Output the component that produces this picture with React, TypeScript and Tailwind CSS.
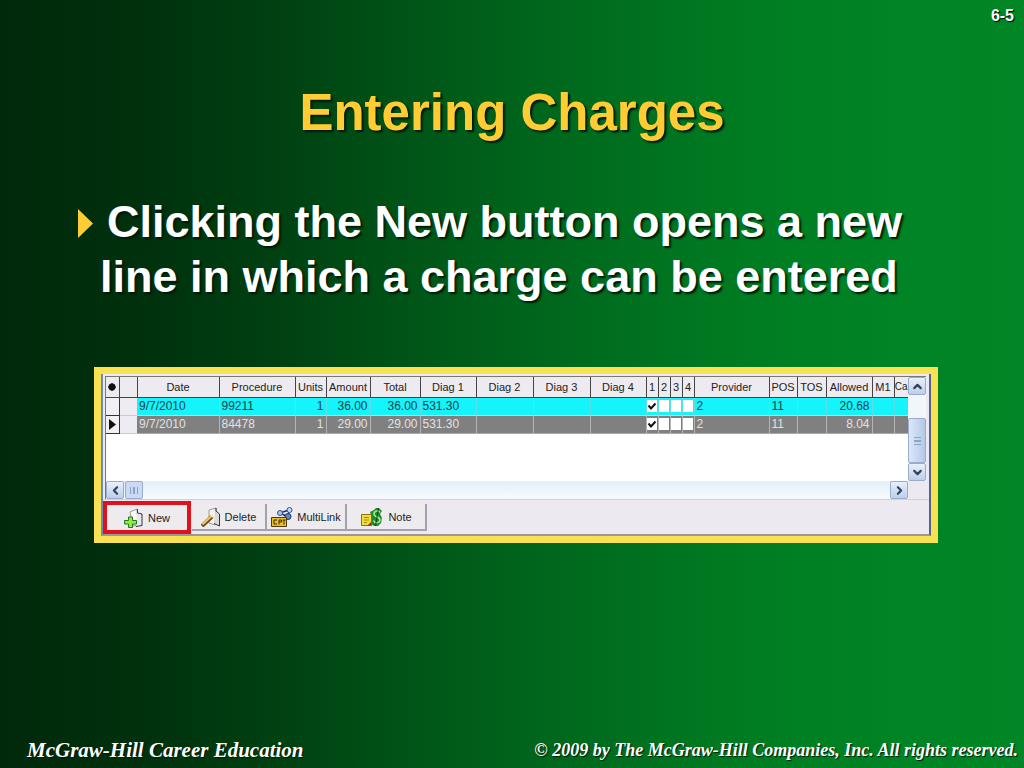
import { ChevronDown, ChevronLeft, ChevronRight, ChevronUp } from "lucide-react";
import type { ReactNode } from "react";

type Column = { label: string; width: string; align?: "left" | "right" };

const columns: Column[] = [
  { label: "Date", width: "w-[82px]", align: "left" },
  { label: "Procedure", width: "w-[76px]", align: "left" },
  { label: "Units", width: "w-[31px]", align: "right" },
  { label: "Amount", width: "w-[44px]", align: "right" },
  { label: "Total", width: "w-[50px]", align: "right" },
  { label: "Diag 1", width: "w-[56px]", align: "left" },
  { label: "Diag 2", width: "w-[57px]" },
  { label: "Diag 3", width: "w-[57px]" },
  { label: "Diag 4", width: "w-[56px]" },
  { label: "1", width: "w-[12px]" },
  { label: "2", width: "w-[12px]" },
  { label: "3", width: "w-[12px]" },
  { label: "4", width: "w-[12px]" },
  { label: "Provider", width: "w-[75px]", align: "left" },
  { label: "POS", width: "w-[28px]", align: "left" },
  { label: "TOS", width: "w-[29px]" },
  { label: "Allowed", width: "w-[46px]", align: "right" },
  { label: "M1", width: "w-[22px]" },
  { label: "Ca", width: "w-[14px]" },
];

const rows = [
  {
    active: false,
    cells: ["9/7/2010", "99211", "1", "36.00", "36.00", "531.30", "", "", "", true, false, false, false, "2", "11", "", "20.68", "", ""],
  },
  {
    active: true,
    cells: ["9/7/2010", "84478", "1", "29.00", "29.00", "531.30", "", "", "", true, false, false, false, "2", "11", "", "8.04", "", ""],
  },
];

function Tick({ label, checked }: { label: string; checked: boolean }) {
  return (
    <span className="relative mx-auto block h-3 w-[10px]">
      <input
        type="checkbox"
        aria-label={label}
        defaultChecked={checked}
        className="peer block h-full w-full appearance-none bg-white"
      />
      <svg viewBox="0 0 10 12" className="pointer-events-none absolute inset-0 hidden h-3 w-[10px] peer-checked:block">
        <path d="M1.5 5.5 4 8.5 8.5 3.5" fill="none" stroke="#111" strokeWidth="2" />
      </svg>
    </span>
  );
}

function ChargeTable() {
  return (
    <table className="w-full table-fixed border-collapse text-[12px] leading-4">
      <colgroup>
        <col className="w-[13px]" />
        <col className="w-[18px]" />
        {columns.map((c) => (
          <col key={c.label} className={c.width} />
        ))}
      </colgroup>
      <thead>
        <tr className="h-5 border-b border-[#444] bg-[#eeebf0] text-[11px] text-[#222]">
          <th className="border-r border-[#444] p-0" aria-label="Current row">
            <svg viewBox="0 0 8 8" className="mx-auto size-2">
              <path d="M4 0 6.6 1.2 8 4 6.6 6.8 4 8 1.4 6.8 0 4 1.4 1.2Z" fill="#111" />
            </svg>
          </th>
          <th className="border-r border-[#444] p-0" aria-label="Status" />
          {columns.map((c) => (
            <th
              key={c.label}
              className="border-r border-[#444] p-0 font-normal whitespace-nowrap last:border-r-0 last:text-[10px]"
            >
              {c.label}
            </th>
          ))}
        </tr>
      </thead>
      <tbody>
        {rows.map((row, i) => (
          <tr
            key={i}
            className={
              row.active
                ? "h-[18px] border-b border-[#aaa] bg-[#808080] text-[#e2e2e2]"
                : "h-[18px] border-b border-[#d4dadc] bg-[#14f4fa] text-[#12434c]"
            }
          >
            <td className="border-r border-b border-[#333] bg-[#f2f0f4] p-0">
              {row.active && (
                <svg viewBox="0 0 7 11" className="mx-auto h-[11px] w-[7px]">
                  <path d="M0 0 7 5.5 0 11Z" fill="#111" />
                </svg>
              )}
            </td>
            <td className="border-b border-[#ccc] bg-[#eeebf2] p-0" />
            {row.cells.map((cell, j) => (
              <td
                key={j}
                className={`border-r p-0 whitespace-nowrap last:border-r-0 ${
                  row.active ? "border-[#b4b4b4]" : "border-[#5ae0e6]"
                } ${columns[j].align === "right" ? "pr-0.5 text-right" : columns[j].align === "left" ? "pl-0.5 text-left" : ""}`}
              >
                {typeof cell === "boolean" ? <Tick label={`Diagnosis ${columns[j].label}, line ${i + 1}`} checked={cell} /> : cell}
              </td>
            ))}
          </tr>
        ))}
      </tbody>
    </table>
  );
}

const scrollButton =
  "grid h-[18px] w-[18px] shrink-0 place-items-center rounded-xs border border-[#9aaccb] bg-gradient-to-b from-[#e8f0fb] to-[#bccfea] text-[#33425e]";

function NewIcon() {
  return (
    <svg viewBox="0 0 20 20" className="size-5 shrink-0">
      <path d="M6 4 13 1 14 17 9 18Z" fill="#f7f7f7" stroke="#999" />
      <path d="M13.500 1V5L18 6V17.500L12 18.500" fill="#e9e7ec" stroke="#333" />
      <path d="M4.500 9H8.500V12.500H12.500V16H8.500V19.500H4.500V16H.5V12.500H4.500Z" fill="#9be83f" stroke="#1f7a24" />
    </svg>
  );
}

function DeleteIcon() {
  return (
    <svg viewBox="0 0 20 20" className="size-5 shrink-0">
      <path d="M8 3 15 1 14 18 8 16Z" fill="#f4f3f6" stroke="#999" />
      <path d="M15 1V4L18.500 7V19L13 16.500" fill="#dcdae0" stroke="#333" />
      <path d="M1 19 12 8.500" stroke="#6b4a18" strokeWidth="4" />
      <path d="M1.500 17.500 11 8.500" stroke="#f6c95a" strokeWidth="2" />
      <path d="M9.500 7 13 10.500" stroke="#fff2b0" strokeWidth="2" />
    </svg>
  );
}

function MultiLinkIcon() {
  return (
    <svg viewBox="0 0 22 20" className="h-5 w-[22px] shrink-0">
      <path d="M9 6 18 3M9 6 17 10M18 3 17 10" stroke="#1c2f55" strokeWidth="1.5" />
      <circle cx="9" cy="6" r="2.500" fill="#a9c6ea" stroke="#2d5590" />
      <circle cx="18.500" cy="3" r="2.500" fill="#c4dcf4" stroke="#2d5590" />
      <circle cx="17" cy="9.500" r="3" fill="#5f8ac6" stroke="#1c2f55" />
      <path d="M.5 10.500H15.500V19.500H.5Z" fill="#e9bd2c" stroke="#4d3c08" />
      <path d="M6 13H3V17H6M8 17.500V13H10.500V15H8M11.500 13H14.500M13 13V17.500" fill="none" stroke="#3a2d06" />
    </svg>
  );
}

function NoteIcon() {
  return (
    <svg viewBox="0 0 24 20" className="h-5 w-6 shrink-0">
      <path d="M10 5 14 3 16 1H19L22 4 20 7 22 11 21 16 18 19H14L11 17 12 11Z" fill="#218a2c" />
      <path d="M20 5.500C19 3 14 3.500 14 7S20.500 9.500 20 13 14.500 16.500 13.500 13.500" fill="none" stroke="#a9e8a4" strokeWidth="1.500" />
      <path d="M18.500 1 15.500 19" stroke="#0e4a16" />
      <path d="M1.500 7.500H11.500V18.500H1.500Z" fill="#f1dc3a" stroke="#8a7412" />
      <path d="M4 10.500H9M4 13H9M4 15.500H7" stroke="#a78a16" />
      <path d="M11.500 14.500V18.500H7.500Z" fill="#a02d12" />
    </svg>
  );
}

function ToolButton({ icon, children, className }: { icon: ReactNode; children: ReactNode; className: string }) {
  return (
    <button type="button" className={`flex items-center justify-center gap-1 whitespace-nowrap bg-[#eeebef] ${className}`}>
      {icon}
      {children}
    </button>
  );
}

const raised = "h-[27px] border-r-2 border-b-2 border-[#a4a0ae]";

function ChargePanel() {
  return (
    <section
      aria-label="Charge lines"
      className="mr-[86px] ml-[94px] border-[7px] border-[#f8e252] bg-[#ece9f0] text-[11px] leading-4 text-[#222]"
    >
      <div className="border-r-2 border-b-2 border-l-2 border-r-[#56628c] border-b-[#9a97a4] border-l-[#7088b8] pt-0.5">
        <div className="mr-[3px] ml-0.5 border-t border-l border-[#777] bg-white">
          <div className="flex h-[104px]">
            <div className="min-w-0 flex-1">
              <ChargeTable />
            </div>
            <div className="flex w-[18px] flex-col bg-[#f1f6fd]">
              <button type="button" aria-label="Scroll up" className={scrollButton}>
                <ChevronUp size={13} strokeWidth={4} />
              </button>
              <div className="mt-auto grid h-[45px] place-items-center rounded-xs border border-[#9aaccb] bg-gradient-to-r from-[#dce8fa] to-[#b4c8e6]">
                <span className="h-2 w-[7px] border-y border-[#8ba3cb] py-0.5">
                  <span className="block h-0.5 border-y border-[#8ba3cb]" />
                </span>
              </div>
              <button type="button" aria-label="Scroll down" className={scrollButton}>
                <ChevronDown size={13} strokeWidth={4} />
              </button>
            </div>
          </div>
          <div className="flex bg-[#ece9f0]">
            <div className="flex flex-1 bg-gradient-to-b from-[#e4eef8] to-[#f6fbff]">
              <button type="button" aria-label="Scroll left" className={scrollButton}>
                <ChevronLeft size={13} strokeWidth={4} />
              </button>
              <div className="ml-px grid h-[18px] w-[18px] place-items-center rounded-xs border border-[#9aaccb] bg-[#c9daf2]">
                <span className="flex h-[7px] w-2 justify-between border-x border-[#8ba3cb] px-0.5">
                  <span className="w-0.5 border-x border-[#8ba3cb]" />
                </span>
              </div>
              <button type="button" aria-label="Scroll right" className={`${scrollButton} ml-auto`}>
                <ChevronRight size={13} strokeWidth={4} />
              </button>
            </div>
            <div className="w-[18px]" />
          </div>
        </div>
        <div className="flex items-center border-t border-[#d2d0d8] pt-px">
          <ToolButton icon={<NewIcon />} className="mr-px h-[33px] w-[88px] border-4 border-[#e0101c]">
            New
          </ToolButton>
          <ToolButton icon={<DeleteIcon />} className={`${raised} w-[75px]`}>
            Delete
          </ToolButton>
          <ToolButton icon={<MultiLinkIcon />} className={`${raised} w-[80px]`}>
            MultiLink
          </ToolButton>
          <ToolButton icon={<NoteIcon />} className={`${raised} w-[80px]`}>
            Note
          </ToolButton>
        </div>
      </div>
    </section>
  );
}

export default function App() {
  return (
    <div className="flex min-h-screen flex-col bg-[linear-gradient(to_right,#00290b_0%,#00310d_14%,#004212_28%,#005f1a_47%,#006c1e_58%,#007c22_73%,#008425_88%,#008626_100%)] font-['Liberation_Sans',Arial,sans-serif] text-white">
      <header className="pt-1 pr-[10px] text-right text-base leading-6 font-bold [text-shadow:1px_1px_1px_#000]">6-5</header>

      <main>
        <h1 className="mt-[53px] text-center text-[51px] leading-16 font-bold text-[#ffcc33] [text-shadow:2px_2px_2px_#001a06]">
          Entering Charges
        </h1>
        <p className="mt-[49px] mb-[63px] pr-16 pl-[100px] -indent-[22px] text-[45px] leading-[55px] font-bold [text-shadow:2px_2px_2px_#001a06]">
          <svg viewBox="0 0 15 29" className="mr-[14px] inline-block h-[29px] w-[15px] align-[-1px]">
            <path d="M0 0 15 14.500 0 29Z" fill="#ffcc33" />
          </svg>
          Clicking the New button opens a new line in which a charge can be entered
        </p>
        <ChargePanel />
      </main>

      <footer className="mt-auto flex items-center justify-between pr-[6px] pb-1 pl-[27px] font-['Liberation_Serif',serif] leading-7 font-bold italic [text-shadow:1px_1px_1px_#001a06]">
        <span className="text-[21px]">McGraw-Hill Career Education</span>
        <span className="text-[18px]">© 2009 by The McGraw-Hill Companies, Inc. All rights reserved.</span>
      </footer>
    </div>
  );
}
